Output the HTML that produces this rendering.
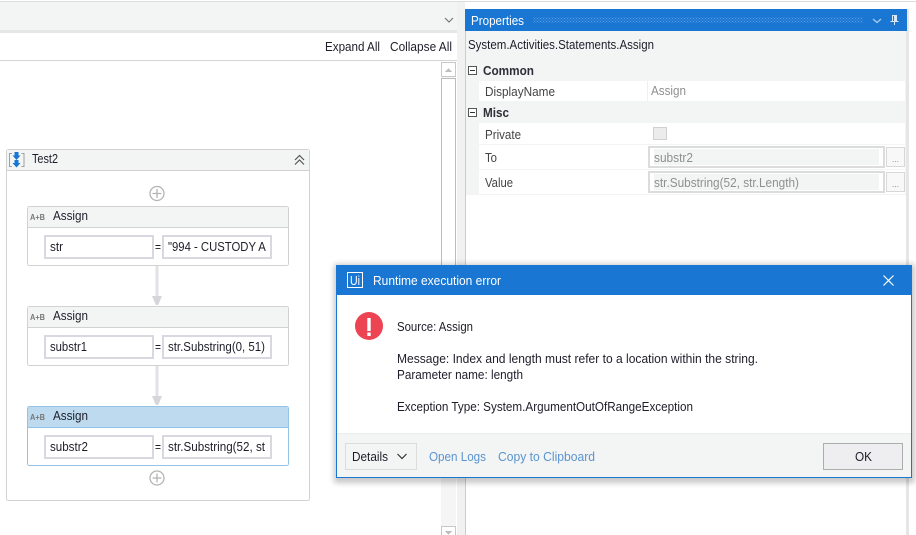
<!DOCTYPE html>
<html><head><meta charset="utf-8">
<style>
html,body{margin:0;padding:0;background:#fff;width:916px;height:535px;overflow:hidden}
svg{display:block}
text{font-family:"Liberation Sans",sans-serif;font-size:12.5px;fill:#1e1e2a}
.g{fill:#8f8f8f}.l{fill:#5b93cf}.w{fill:#fff}.d{fill:#444}
.b{font-weight:bold;fill:#2e2e38}
.ab{font-size:8px;font-weight:bold;fill:#777}
</style></head><body>
<svg width="916" height="535" viewBox="0 0 916 535" xmlns="http://www.w3.org/2000/svg" shape-rendering="crispEdges">
<defs>
<clipPath id="c1"><rect x="165" y="237" width="101" height="20"/></clipPath>
<clipPath id="c3"><rect x="165" y="437" width="101" height="20"/></clipPath>
<filter id="sh" x="-5%" y="-10%" width="110%" height="120%"><feGaussianBlur stdDeviation="3"/></filter>
<pattern id="dots" width="3" height="3" patternUnits="userSpaceOnUse"><rect width="1" height="1" fill="#5a9de0"/><rect x="1.5" y="1.5" width="1" height="1" fill="#5a9de0"/></pattern>
</defs>
<rect width="916" height="535" fill="#fff"/>
<!-- top toolbar -->
<rect x="0" y="1" width="916" height="1" fill="#dcdcdc"/>
<rect x="0" y="2" width="458" height="28" fill="#f3f5f5"/>
<rect x="0" y="30" width="458" height="3" fill="#e6e6e6"/>
<path d="M445 18l4 4 4-4" fill="none" stroke="#777" stroke-width="1.2" shape-rendering="auto"/>
<text x="325" y="51" textLength="55" lengthAdjust="spacingAndGlyphs">Expand All</text>
<text x="390" y="51" textLength="62" lengthAdjust="spacingAndGlyphs">Collapse All</text>
<rect x="0" y="60" width="458" height="1" fill="#d4d4d4"/>
<!-- splitter / edge -->
<rect x="457" y="2" width="8" height="533" fill="#f1f1f1"/>
<rect x="465" y="9" width="1" height="526" fill="#cccccc"/>
<!-- scrollbar -->
<rect x="441" y="62" width="15" height="473" fill="#f5f5f5"/>
<rect x="441.5" y="62.5" width="14" height="14" fill="#fff" stroke="#c8c8c8"/>
<path d="M445 72l3.500-4 3.500 4z" fill="#bdbdbd"/>
<rect x="441.500" y="78.500" width="14" height="300" fill="#fff" stroke="#bcbcbc"/>
<rect x="441.5" y="526.500" width="14" height="14" fill="#fff" stroke="#c8c8c8"/>
<path d="M445 531h7l-3.500 4z" fill="#bdbdbd"/>
<!-- Test2 container -->
<rect x="6.500" y="149.500" width="303" height="351" rx="2" fill="#fff" stroke="#d2d2d2"/>
<rect x="7" y="150" width="302" height="20" fill="#f3f5f5"/>
<rect x="7" y="170" width="302" height="1" fill="#d2d2d2"/>
<path d="M12 153.500H9.500V166.500H12M21.500 153.500H24V166.500H21.500" fill="none" stroke="#a0a0a0" stroke-width="1"/>
<path d="M14.500 152h4v3.500h2l-4 4.500-4-4.500h2zM14.500 160h4v3h2l-4 4.500-4-4.500h2z" fill="#1976d2" shape-rendering="auto"/>
<text x="32" y="163" textLength="26" lengthAdjust="spacingAndGlyphs">Test2</text>
<path d="M295 160l4.500-4.500 4.500 4.500M295 164.500l4.500-4.500 4.500 4.500" fill="none" stroke="#555" stroke-width="1.200" shape-rendering="auto"/>
<g shape-rendering="auto" fill="none" stroke="#b4b4b4" stroke-width="1.300">
<circle cx="157" cy="193.500" r="7"/><path d="M152.500 193.500h9M157 189v9"/>
<circle cx="157" cy="478" r="7"/><path d="M152.500 478h9M157 473.500v9"/>
</g>
<!-- connectors -->
<rect x="155.500" y="266" width="3" height="31" fill="#e2e2e6"/>
<path d="M152 296h10l-2.500 6-1.500 3h-2l-1.500-3z" fill="#d6d6da" shape-rendering="auto"/>
<rect x="155.500" y="366" width="3" height="31" fill="#e2e2e6"/>
<path d="M152 396h10l-2.500 6-1.500 3h-2l-1.500-3z" fill="#d6d6da" shape-rendering="auto"/>
<!-- assign 1 -->
<rect x="27.500" y="206.500" width="261" height="59" rx="2" fill="#fff" stroke="#d2d2d2"/>
<rect x="28" y="207" width="260" height="20" fill="#f3f5f5"/>
<rect x="28" y="227" width="260" height="1" fill="#d2d2d2"/>
<text x="30" y="220" class="ab" textLength="15" lengthAdjust="spacingAndGlyphs">A+B</text>
<text x="53" y="220" textLength="35" lengthAdjust="spacingAndGlyphs">Assign</text>
<rect x="45" y="236" width="108" height="22" fill="#fff" stroke="#d8d8e0" stroke-width="2"/>
<text x="50" y="251" textLength="13" lengthAdjust="spacingAndGlyphs">str</text>
<text x="155" y="251" textLength="6" lengthAdjust="spacingAndGlyphs">=</text>
<rect x="163" y="236" width="108" height="22" fill="#fff" stroke="#d8d8e0" stroke-width="2"/>
<text x="168" y="251" clip-path="url(#c1)" textLength="106" lengthAdjust="spacingAndGlyphs">"994 - CUSTODY AC</text>
<!-- assign 2 -->
<rect x="27.500" y="306.500" width="261" height="59" rx="2" fill="#fff" stroke="#d2d2d2"/>
<rect x="28" y="307" width="260" height="20" fill="#f3f5f5"/>
<rect x="28" y="327" width="260" height="1" fill="#d2d2d2"/>
<text x="30" y="320" class="ab" textLength="15" lengthAdjust="spacingAndGlyphs">A+B</text>
<text x="53" y="320" textLength="35" lengthAdjust="spacingAndGlyphs">Assign</text>
<rect x="45" y="336" width="108" height="22" fill="#fff" stroke="#d8d8e0" stroke-width="2"/>
<text x="50" y="351" textLength="37" lengthAdjust="spacingAndGlyphs">substr1</text>
<text x="155" y="351" textLength="6" lengthAdjust="spacingAndGlyphs">=</text>
<rect x="163" y="336" width="108" height="22" fill="#fff" stroke="#d8d8e0" stroke-width="2"/>
<text x="168" y="351" textLength="97" lengthAdjust="spacingAndGlyphs">str.Substring(0, 51)</text>
<!-- assign 3 -->
<rect x="27.500" y="406.500" width="261" height="59" rx="2" fill="#fff" stroke="#93c3e6"/>
<rect x="28" y="407" width="260" height="20" fill="#bddaee"/>
<rect x="28" y="427" width="260" height="1" fill="#93c3e6"/>
<text x="30" y="420" class="ab" textLength="15" lengthAdjust="spacingAndGlyphs">A+B</text>
<text x="53" y="420" textLength="35" lengthAdjust="spacingAndGlyphs">Assign</text>
<rect x="45" y="436" width="108" height="22" fill="#fff" stroke="#d8d8e0" stroke-width="2"/>
<text x="50" y="451" textLength="38" lengthAdjust="spacingAndGlyphs">substr2</text>
<text x="155" y="451" textLength="6" lengthAdjust="spacingAndGlyphs">=</text>
<rect x="163" y="436" width="108" height="22" fill="#fff" stroke="#d8d8e0" stroke-width="2"/>
<text x="168" y="451" clip-path="url(#c3)" textLength="97" lengthAdjust="spacingAndGlyphs">str.Substring(52, st</text>
<!-- properties -->
<rect x="466" y="31" width="441" height="504" fill="#fff"/>
<rect x="466" y="31" width="441" height="164" fill="#f3f5f5"/>
<rect x="906" y="9" width="3" height="526" fill="#e6e6e6"/>
<rect x="465" y="9" width="442" height="22" fill="#1976d2"/>
<text x="471" y="25" class="w" textLength="53" lengthAdjust="spacingAndGlyphs">Properties</text>
<rect x="533" y="17" width="330" height="6" fill="url(#dots)"/>
<path d="M873 19l4 3.500 4-3.500" fill="none" stroke="#a8cdf2" stroke-width="1.300" shape-rendering="auto"/>
<path d="M892.500 15.500h4v6h-4zM890.500 21.500h8M894.500 22v3" fill="none" stroke="#d5e7f8" stroke-width="1"/>
<rect x="894" y="16" width="2" height="5" fill="#d5e7f8"/>
<text x="468" y="49" textLength="186" lengthAdjust="spacingAndGlyphs">System.Activities.Statements.Assign</text>
<rect x="468.500" y="66.500" width="8" height="8" fill="#fff" stroke="#555"/><rect x="470" y="70" width="5" height="1" fill="#333"/>
<text x="483" y="75" class="b" textLength="51" lengthAdjust="spacingAndGlyphs">Common</text>
<rect x="479" y="81" width="426" height="20" fill="#fff"/>
<rect x="647" y="81" width="1" height="20" fill="#f0f0f0"/>
<text x="485" y="96" class="d" textLength="70" lengthAdjust="spacingAndGlyphs">DisplayName</text>
<text x="651" y="95" class="g" textLength="35" lengthAdjust="spacingAndGlyphs">Assign</text>
<rect x="468.500" y="108.500" width="8" height="8" fill="#fff" stroke="#555"/><rect x="470" y="112" width="5" height="1" fill="#333"/>
<text x="483" y="117" class="b" textLength="26" lengthAdjust="spacingAndGlyphs">Misc</text>
<rect x="479" y="123" width="426" height="21" fill="#fff"/>
<rect x="653.500" y="127.500" width="13" height="12" fill="#ececec" stroke="#d0d0d0"/>
<text x="485" y="139" class="d" textLength="36" lengthAdjust="spacingAndGlyphs">Private</text>
<rect x="479" y="145" width="426" height="24" fill="#fff"/>
<text x="485" y="162" class="d" textLength="12" lengthAdjust="spacingAndGlyphs">To</text>
<rect x="649" y="147" width="235" height="20" fill="#fff" stroke="#dcdcdc" stroke-width="2"/>
<rect x="654" y="149" width="225" height="16" fill="#f3f5f5"/>
<text x="654" y="162" class="g" textLength="39" lengthAdjust="spacingAndGlyphs">substr2</text>
<rect x="886.500" y="147.500" width="18" height="19" fill="#f8f8f8" stroke="#d8d8d8"/>
<text x="892" y="162" class="g" style="font-size:9px" textLength="7" lengthAdjust="spacingAndGlyphs">...</text>
<rect x="479" y="170" width="426" height="24" fill="#fff"/>
<text x="485" y="187" class="d" textLength="28" lengthAdjust="spacingAndGlyphs">Value</text>
<rect x="649" y="172" width="235" height="20" fill="#fff" stroke="#dcdcdc" stroke-width="2"/>
<rect x="654" y="174" width="225" height="16" fill="#f3f5f5"/>
<text x="654" y="187" class="g" textLength="145" lengthAdjust="spacingAndGlyphs">str.Substring(52, str.Length)</text>
<rect x="886.500" y="172.500" width="18" height="19" fill="#f8f8f8" stroke="#d8d8d8"/>
<text x="892" y="187" class="g" style="font-size:9px" textLength="7" lengthAdjust="spacingAndGlyphs">...</text>
<!-- dialog -->
<rect x="334" y="264" width="581" height="219" fill="#000" opacity=".22" filter="url(#sh)" shape-rendering="auto"/>
<rect x="336.500" y="265.500" width="575" height="212" fill="#fff" stroke="#1976d2"/>
<rect x="336" y="265" width="576" height="30" fill="#1976d2"/>
<rect x="347.500" y="272.500" width="15" height="15" fill="none" stroke="#fff" stroke-width="1.300"/>
<text x="350" y="285" class="w" style="font-size:13px" textLength="10" lengthAdjust="spacingAndGlyphs">Ui</text>
<text x="373" y="285" class="w" textLength="128" lengthAdjust="spacingAndGlyphs">Runtime execution error</text>
<path d="M883.500 275.500l10 10M893.500 275.500l-10 10" stroke="#fff" stroke-width="1.200" fill="none" shape-rendering="auto"/>
<circle cx="369" cy="326" r="14" fill="#ec4452" shape-rendering="auto"/>
<rect x="367.300" y="318" width="3.400" height="13" fill="#fff" shape-rendering="auto"/>
<rect x="367.300" y="332.500" width="3.400" height="3.500" fill="#fff" shape-rendering="auto"/>
<text x="397" y="331" textLength="76" lengthAdjust="spacingAndGlyphs">Source: Assign</text>
<text x="397" y="363" textLength="361" lengthAdjust="spacingAndGlyphs">Message: Index and length must refer to a location within the string.</text>
<text x="397" y="379" textLength="126" lengthAdjust="spacingAndGlyphs">Parameter name: length</text>
<text x="397" y="411" textLength="296" lengthAdjust="spacingAndGlyphs">Exception Type: System.ArgumentOutOfRangeException</text>
<rect x="337" y="434" width="574" height="43" fill="#f3f5f5"/>
<rect x="337" y="433" width="574" height="1" fill="#ececec"/>
<rect x="345.500" y="443.500" width="71" height="26" fill="#f3f5f5" stroke="#dcdcdc"/>
<text x="352" y="461" textLength="36" lengthAdjust="spacingAndGlyphs">Details</text>
<path d="M397.500 454l4.500 4.500 4.500-4.500" fill="none" stroke="#333" stroke-width="1.200" shape-rendering="auto"/>
<text x="429" y="461" class="l" textLength="57" lengthAdjust="spacingAndGlyphs">Open Logs</text>
<text x="498" y="461" class="l" textLength="97" lengthAdjust="spacingAndGlyphs">Copy to Clipboard</text>
<rect x="823.500" y="443.500" width="79" height="26" fill="#eeeef0" stroke="#adadad"/>
<text x="855" y="461" textLength="17" lengthAdjust="spacingAndGlyphs">OK</text>
</svg>
</body></html>
